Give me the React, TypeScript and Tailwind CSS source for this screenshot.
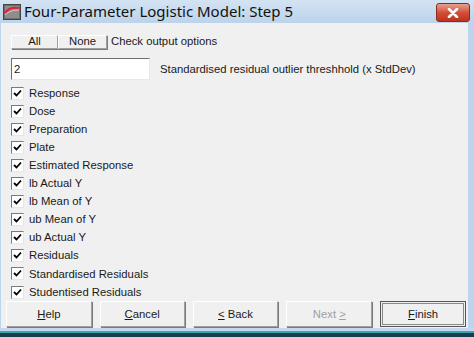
import React from "react";

const options = [
  "Response",
  "Dose",
  "Preparation",
  "Plate",
  "Estimated Response",
  "lb Actual Y",
  "lb Mean of Y",
  "ub Mean of Y",
  "ub Actual Y",
  "Residuals",
  "Standardised Residuals",
  "Studentised Residuals",
];

function Check() {
  return (
    <span className="w-[13px] h-[13px] bg-white border border-t-[#7a7a7a] border-l-[#7a7a7a] border-b-[#e6e6e6] border-r-[#e6e6e6] flex items-center justify-center shrink-0">
      <svg width="9" height="9" viewBox="0 0 9 9">
        <path d="M1 4 L3.5 6.5 L8 1.5" fill="none" stroke="#000" strokeWidth="1.8" />
      </svg>
    </span>
  );
}

function Btn({
  children,
  disabled,
  isDefault,
  className,
}: {
  children: React.ReactNode;
  disabled?: boolean;
  isDefault?: boolean;
  className?: string;
}) {
  if (isDefault) {
    return (
      <div className={"border border-[#555] p-[1px] bg-[#f0f0f0] " + (className ?? "")}>
        <div className="h-full w-full border border-[#888] flex items-center justify-center">{children}</div>
      </div>
    );
  }
  return (
    <div className={className}>
      <div
        className={
          "h-full w-full flex items-center justify-center bg-[#f0f0f0] border border-t-white border-l-white border-b-[#a0a0a0] border-r-[#a0a0a0] shadow-[1px_1px_0_#7a7a7a] " +
          (disabled ? "text-[#a0a0a0]" : "text-[#1a1a1a]")
        }
      >
        {children}
      </div>
    </div>
  );
}

export default function App() {
  return (
    <div
      className="w-[474px] h-[337px] bg-[#bcd4ec] flex flex-col overflow-hidden text-[11.3px] text-[#1a1a1a]"
      style={{ fontFamily: '"Liberation Sans", Arial, sans-serif' }}
    >
      {/* title bar */}
      <div className="h-[23px] shrink-0 flex items-center bg-gradient-to-b from-[#d3e3f3] to-[#bcd3eb] relative">
        <svg width="18" height="16" viewBox="0 0 18 16" className="ml-[3px] mr-[3px]">
          <rect x="0.5" y="0.5" width="17" height="15" fill="#6e6e6e" stroke="#444" />
          <rect x="2" y="2" width="14" height="12" fill="#8d8d8d" />
          <path d="M2 9 C5 4 10 3 16 4" fill="none" stroke="#e0203a" strokeWidth="2" />
          <path d="M2 11 C6 7 11 6 16 6" fill="none" stroke="#f2c0c0" strokeWidth="1" />
        </svg>
        <span className="text-[15px] text-[#111]" style={{ fontFamily: '"Noto Sans", "Open Sans", sans-serif' }}>
          Four-Parameter Logistic Model: Step 5
        </span>
        <div className="absolute right-[4px] top-[3px] w-[34px] h-[19px] rounded-[3px] border border-[#8a2a20] bg-gradient-to-b from-[#e8a090] via-[#d0503a] to-[#c0301e] flex items-center justify-center">
          <svg width="12" height="10" viewBox="0 0 12 10">
            <path d="M2 1 L10 9 M10 1 L2 9" stroke="#fff" strokeWidth="2.6" strokeLinecap="round" />
          </svg>
        </div>
      </div>

      {/* client */}
      <div className="ml-[1px] mr-[6px] h-[305px] shrink-0 bg-[#f0f0f0] flex flex-col pl-[10px] pr-[2px]">
        <div className="flex items-center mt-[12px] h-[13px]">
          <Btn className="w-[47px] h-[14px]">All</Btn>
          <Btn className="w-[49px] h-[14px]">None</Btn>
          <span className="ml-[4px]">Check output options</span>
        </div>

        <div className="flex items-center mt-[10px]">
          <div className="w-[139px] h-[22px] bg-white border border-t-[#6e6e6e] border-l-[#6e6e6e] border-b-[#e8e8e8] border-r-[#e8e8e8] pl-[2px] flex items-center">
            2
          </div>
          <span className="ml-[10px]">Standardised residual outlier threshhold (x StdDev)</span>
        </div>

        <div className="flex flex-col mt-[4px]">
          {options.map((o) => (
            <div key={o} className="h-[18.1px] flex items-center">
              <Check />
              <span className="ml-[5px]">{o}</span>
            </div>
          ))}
        </div>

        <div className="flex mt-auto mb-[2px] gap-[8px] -ml-[5px]">
          <Btn className="w-[86px] h-[26px]">
            <span>
              <u>H</u>elp
            </span>
          </Btn>
          <Btn className="w-[85px] h-[26px]">
            <span>
              <u>C</u>ancel
            </span>
          </Btn>
          <Btn className="w-[86px] h-[26px]">
            <span>
              <u>&lt;</u> Back
            </span>
          </Btn>
          <Btn className="w-[86px] h-[26px]" disabled>
            <span>
              Next <u>&gt;</u>
            </span>
          </Btn>
          <Btn className="w-[86px] h-[26px]" isDefault>
            <span>
              <u>F</u>inish
            </span>
          </Btn>
        </div>
      </div>

      <div className="h-[3px] shrink-0 bg-[#c4d9ee]" />
      <div className="h-[2px] shrink-0 bg-[#3ea2b2]" />
      <div className="flex-1 bg-[#173c4a]" />
    </div>
  );
}
